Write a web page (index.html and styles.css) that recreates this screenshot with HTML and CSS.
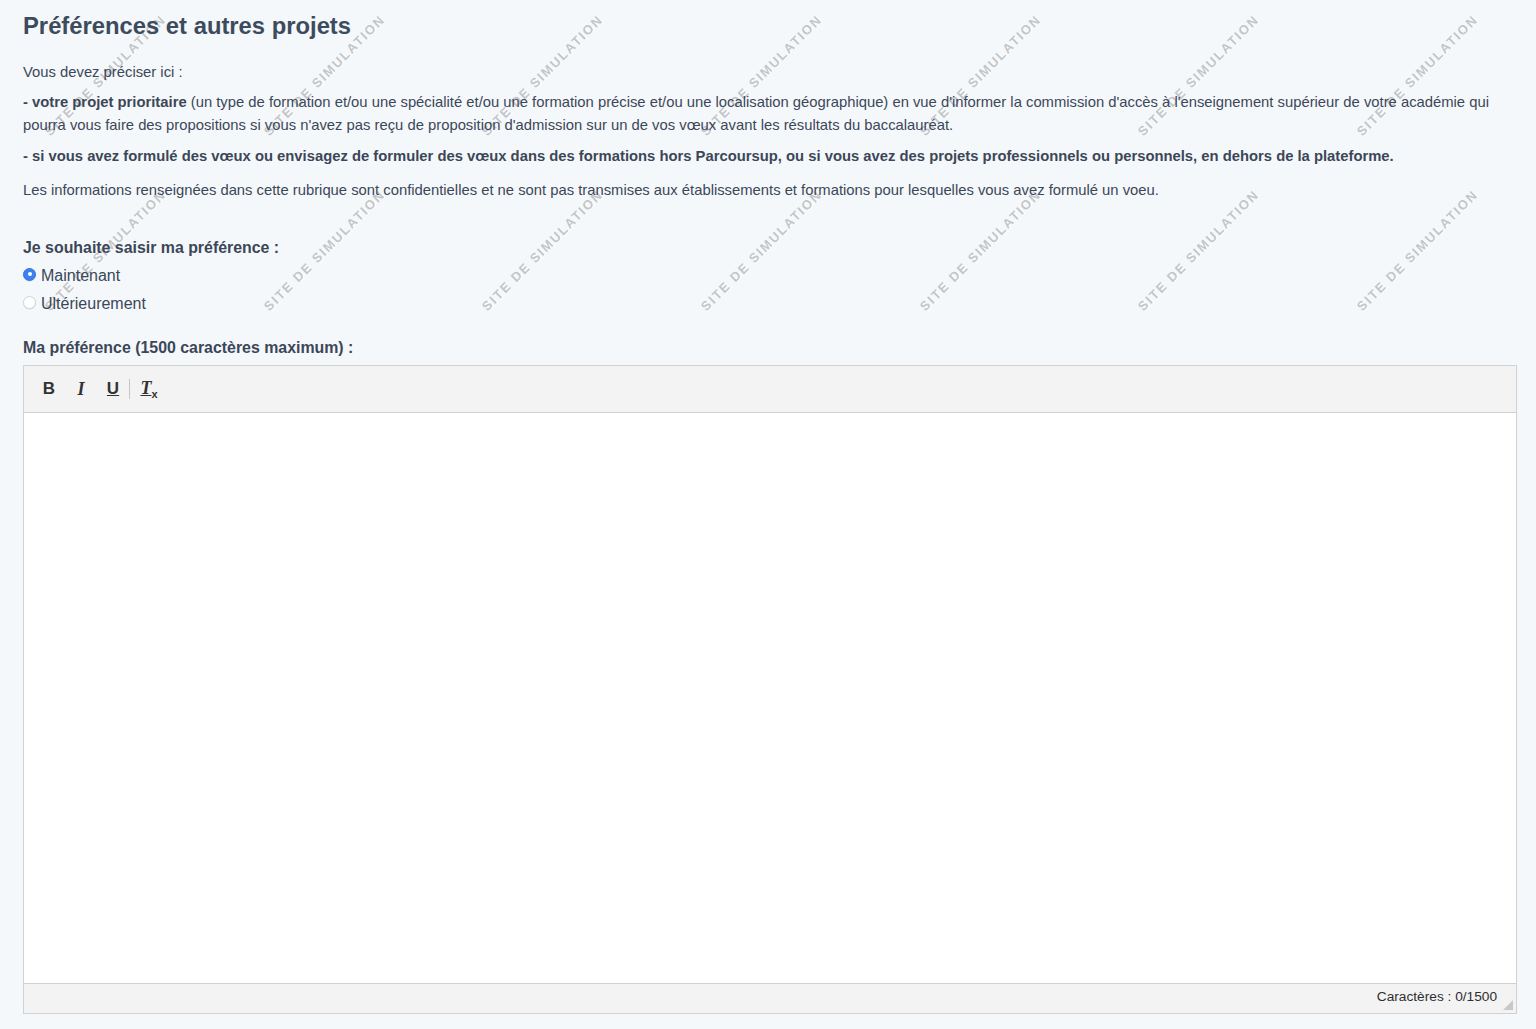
FILE: index.html
```html
<!DOCTYPE html>
<html lang="fr">
<head>
<meta charset="utf-8">
<title>Préférences et autres projets</title>
<link rel="stylesheet" href="styles.css">
</head>
<body>
<div class="watermarks" aria-hidden="true">
  <span>SITE DE SIMULATION</span><span>SITE DE SIMULATION</span><span>SITE DE SIMULATION</span><span>SITE DE SIMULATION</span><span>SITE DE SIMULATION</span><span>SITE DE SIMULATION</span><span>SITE DE SIMULATION</span>
  <span>SITE DE SIMULATION</span><span>SITE DE SIMULATION</span><span>SITE DE SIMULATION</span><span>SITE DE SIMULATION</span><span>SITE DE SIMULATION</span><span>SITE DE SIMULATION</span><span>SITE DE SIMULATION</span>
  <span>SITE DE SIMULATION</span><span>SITE DE SIMULATION</span><span>SITE DE SIMULATION</span><span>SITE DE SIMULATION</span><span>SITE DE SIMULATION</span><span>SITE DE SIMULATION</span><span>SITE DE SIMULATION</span>
</div>
<main class="page">
  <h1 class="title">Préférences et autres projets</h1>
  <p class="intro">Vous devez préciser ici :</p>
  <p class="item"><strong>- votre projet prioritaire</strong> (un type de formation et/ou une spécialité et/ou une formation précise et/ou une localisation géographique) en vue d'informer la commission d'accès à l'enseignement supérieur de votre académie qui pourra vous faire des propositions si vous n'avez pas reçu de proposition d'admission sur un de vos vœux avant les résultats du baccalauréat.</p>
  <p class="item"><strong>- si vous avez formulé des vœux ou envisagez de formuler des vœux dans des formations hors Parcoursup, ou si vous avez des projets professionnels ou personnels, en dehors de la plateforme.</strong></p>
  <p class="note">Les informations renseignées dans cette rubrique sont confidentielles et ne sont pas transmises aux établissements et formations pour lesquelles vous avez formulé un voeu.</p>

  <div class="field-label first">Je souhaite saisir ma préférence :</div>
  <div class="radios">
    <label class="radio-row"><span class="radio checked"></span>Maintenant</label>
    <label class="radio-row"><span class="radio"></span>Ultérieurement</label>
  </div>

  <div class="field-label second">Ma préférence (1500 caractères maximum) :</div>
  <div class="editor">
    <div class="toolbar">
      <span class="tool bold">B</span>
      <span class="tool italic">I</span>
      <span class="tool underline">U</span>
      <span class="sep"></span>
      <span class="tool clear"><span class="clear-t">T</span><span class="clear-x">x</span></span>
    </div>
    <div class="content"></div>
    <div class="footer">
      <span class="count">Caractères : 0/1500</span>
      <svg class="grip" width="10" height="10" viewBox="0 0 10 10"><path d="M10 0 L10 10 L0 10 Z" fill="#c8c8c8"/></svg>
    </div>
  </div>
</main>
</body>
</html>
```
FILE: styles.css
```css
html, body {
  margin: 0;
  padding: 0;
  background: #f5f8fa;
}
body {
  font-family: "Liberation Sans", Arial, sans-serif;
  color: #3b4759;
  position: relative;
  min-height: 1029px;
}
.watermarks {
  position: absolute;
  left: -4px;
  top: 0;
  z-index: 0;
  display: grid;
  grid-template-columns: repeat(7, 218.7px);
  grid-auto-rows: 175px;
  pointer-events: none;
}
.watermarks span {
  display: flex;
  align-items: center;
  justify-content: center;
  width: 218px;
  height: 150px;
  transform: rotate(-45deg);
  font-size: 13px;
  font-weight: bold;
  color: #c3c6c9;
  text-shadow: 1px 1px 0 #fff, 0 0 1px #fff;
  white-space: nowrap;
  letter-spacing: 1.7px;
}
.page {
  position: relative;
  z-index: 1;
  padding: 12px 19px 16px 23px;
}
.title {
  margin: 0;
  font-size: 23.8px;
  line-height: 28px;
  font-weight: bold;
  color: #3d4b5e;
}
p {
  margin: 0;
  font-size: 14.8px;
  line-height: 23px;
}
.intro { margin-top: 21px; }
.item { margin-top: 7px; }
.item + .item { margin-top: 8px; }
.note { margin-top: 11px; }
strong { font-weight: bold; }
.field-label {
  font-size: 15.9px;
  line-height: 23px;
  font-weight: bold;
}
.field-label.first { margin-top: 34px; }
.field-label.second { margin-top: 18px; margin-bottom: 6px; }
.radios {
  display: flex;
  flex-direction: column;
  padding-top: 3px;
}
.radio-row {
  display: flex;
  align-items: center;
  height: 28px;
  font-size: 16px;
}
.radio {
  box-sizing: border-box;
  width: 13px;
  height: 13px;
  border-radius: 50%;
  background: #fff;
  border: 1px solid #d3d6da;
  box-shadow: 0 0.5px 1px rgba(0,0,0,0.12);
  margin-right: 5px;
  position: relative;
  top: -2px;
}
.radio.checked {
  background: #3b82f0;
  border-color: #3574e0;
}
.radio.checked::after {
  content: "";
  position: absolute;
  left: 3.5px;
  top: 3.5px;
  width: 4px;
  height: 4px;
  border-radius: 50%;
  background: #fff;
}
.editor {
  border: 1px solid #d1d1d1;
  background: #fff;
  display: flex;
  flex-direction: column;
}
.toolbar {
  height: 47px;
  background: #f3f3f3;
  border-bottom: 1px solid #d1d1d1;
  display: flex;
  align-items: center;
  padding-left: 13px;
  padding-bottom: 1px;
  box-sizing: border-box;
  color: #333;
}
.tool {
  width: 24px;
  margin-right: 8px;
  text-align: center;
  font-size: 17px;
  line-height: 20px;
  font-family: "Liberation Sans", Arial, sans-serif;
  color: #333;
}
.tool.bold { font-weight: bold; }
.tool.italic { font-style: italic; font-weight: bold; font-family: "Liberation Serif", serif; font-size: 18px; }
.tool.underline { text-decoration: underline; font-weight: bold; }
.sep {
  width: 1px;
  height: 20px;
  background: #c6c6c6;
  margin-left: -4px;
  margin-right: 7px;
}
.tool.clear {
  position: relative;
  font-family: "Liberation Serif", serif;
  font-style: italic;
  font-weight: bold;
  font-size: 18px;
}
.clear-t { text-decoration: underline; }
.clear-x {
  font-family: "Liberation Sans", Arial, sans-serif;
  font-style: normal;
  font-weight: bold;
  font-size: 11px;
  position: relative;
  top: 4px;
}
.content {
  height: 570px;
  background: #fff;
}
.footer {
  box-sizing: border-box;
  height: 30px;
  padding-bottom: 4px;
  border-top: 1px solid #d1d1d1;
  background: #f3f3f3;
  display: flex;
  align-items: center;
  justify-content: flex-end;
  position: relative;
  font-size: 13.7px;
  color: #2f2f2f;
}
.count { margin-right: 19px; }
.grip {
  position: absolute;
  right: 3px;
  bottom: 3px;
}
```
